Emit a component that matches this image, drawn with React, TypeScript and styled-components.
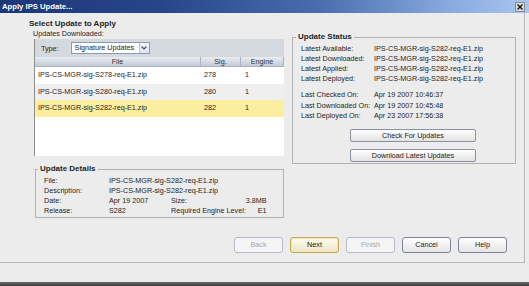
import React from "react";
import styled, { createGlobalStyle, css } from "styled-components";

const Global = createGlobalStyle`
  html, body { margin: 0; padding: 0; background: #ececec; }
  * { box-sizing: border-box; }
`;

const Window = styled.div`
  width: 529px;
  height: 286px;
  display: flex;
  flex-direction: column;
  background: #ececec;
  font-family: "Liberation Sans", Arial, sans-serif;
  font-size: 7.2px;
  color: #1e1e1e;
  overflow: hidden;
`;

const TitleBar = styled.div`
  height: 13px;
  flex: none;
  display: flex;
  align-items: center;
  justify-content: space-between;
  padding: 0 4px 0 2px;
  background: linear-gradient(to right, #1c3878 0%, #26458a 30%, #4a6cae 60%, #88aade 85%, #a8c6f0 100%);
`;

const Title = styled.span`
  color: #fff;
  font-weight: bold;
  font-size: 7.7px;
  line-height: 13px;
`;

const CloseBox = styled.div`
  width: 10px;
  height: 10px;
  background: #dcdcdc;
  border: 1px solid #8a8a8a;
  display: flex;
  align-items: center;
  justify-content: center;
`;

const Panel = styled.div`
  width: 525px;
  height: 250px;
  flex: none;
  border-right: 1px solid #b8b8b8;
  border-bottom: 1px solid #b8b8b8;
  padding: 6px 17px 0 29px;
  display: flex;
  flex-direction: column;
`;

const Columns = styled.div`
  display: grid;
  grid-template-columns: 255px 224px;
  column-gap: 8px;
  height: 201px;
  align-items: start;
`;

const LeftCol = styled.div`
  display: flex;
  flex-direction: column;
`;

const Heading = styled.div`
  font-weight: bold;
  font-size: 8px;
  line-height: 10px;
  height: 10px;
`;

const SubLabel = styled.div`
  line-height: 10px;
  height: 10px;
  margin-left: 4px;
`;

const TablePanel = styled.div`
  margin-left: 5px;
  width: 250px;
  height: 117px;
  background: #fff;
  border-left: 1px solid #8e8e8e;
  display: flex;
  flex-direction: column;
`;

const TypeStrip = styled.div`
  height: 18px;
  flex: none;
  background: #d4d8df;
  display: flex;
  align-items: center;
  padding-left: 6px;
  gap: 12px;
`;

const Select = styled.div`
  width: 79px;
  height: 12px;
  background: #fff;
  border: 1px solid #8c9ab0;
  display: flex;
  align-items: center;
  justify-content: space-between;
  padding-left: 3px;
  line-height: 10px;
`;

const SelectArrow = styled.div`
  width: 10px;
  height: 10px;
  border-left: 1px solid #b8c2d0;
  background: linear-gradient(#f6f8fb, #dde3ec);
  display: flex;
  align-items: center;
  justify-content: center;
`;

const Grid = styled.div`
  display: grid;
  grid-template-columns: 166px 40px 1fr;
`;

const HeadCell = styled.div`
  height: 10px;
  line-height: 10px;
  text-align: center;
  color: #333;
  background: linear-gradient(#e9edf3, #c3cbd7);
  border-right: 1px solid #a9b2bf;
  border-bottom: 1px solid #a9b2bf;
  &:last-child { border-right: none; }
`;

const Cell = styled.div<{ $bg: string; $pad?: number }>`
  height: 16.5px;
  line-height: 16.5px;
  padding-left: ${(p) => p.$pad ?? 3}px;
  background: ${(p) => p.$bg};
  white-space: nowrap;
`;

const groupBox = css`
  border: 1px solid #b2b2b2;
  margin: 0;
  min-width: 0;
`;

const Legend = styled.legend<{ $shift: number }>`
  font-weight: bold;
  font-size: 8px;
  line-height: 10px;
  padding: 0 2px;
  margin-left: ${(p) => p.$shift}px;
`;

const DetailsGroup = styled.fieldset`
  ${groupBox}
  margin-top: 8px;
  margin-left: 6px;
  width: 249px;
  padding: 2px 23px 1px 8px;
  display: grid;
  grid-template-columns: 65px 62px 1fr auto;
  grid-auto-rows: 10px;
  line-height: 10px;
  white-space: nowrap;
`;

const Span3 = styled.div`
  grid-column: 2 / span 3;
`;

const Right = styled.div`
  text-align: right;
`;

const StatusGroup = styled.fieldset`
  ${groupBox}
  margin-top: 13px;
  width: 224px;
  padding: 2px 8px 1px 8px;
  display: flex;
  flex-direction: column;
`;

const InfoList = styled.div<{ $gap: number }>`
  display: grid;
  grid-template-columns: 73px 1fr;
  grid-auto-rows: ${(p) => p.$gap}px;
  line-height: ${(p) => p.$gap}px;
  white-space: nowrap;
`;

const Spacer = styled.div<{ $h: number }>`
  height: ${(p) => p.$h}px;
  flex: none;
`;

const ActionButton = styled.div`
  margin-left: 49px;
  width: 126px;
  height: 13px;
  line-height: 11px;
  text-align: center;
  border: 1px solid #8a92a0;
  border-radius: 2px;
  background: linear-gradient(#ffffff, #e2e2e2);
  color: #222;
`;

const ButtonRow = styled.div`
  margin-top: 17px;
  display: flex;
  justify-content: flex-end;
  gap: 7px;
`;

const WizardButton = styled.div<{ $variant?: "disabled" | "default" }>`
  width: 49px;
  height: 16px;
  line-height: 14px;
  text-align: center;
  border-radius: 3px;
  border: 1px solid #7c8696;
  background: linear-gradient(#ffffff, #e4e4e4);
  color: #222;
  ${(p) =>
    p.$variant === "disabled" &&
    css`
      border-color: #b4bccb;
      background: #f5f5f5;
      color: #a8a8a8;
    `}
  ${(p) =>
    p.$variant === "default" &&
    css`
      border-color: #c6a858;
      background: linear-gradient(#fffdf0, #ebe5c6);
      box-shadow: inset 0 0 0 1px #f3e6b0;
      color: #111;
    `}
`;

const Filler = styled.div`
  flex: 1;
`;

const BottomBar = styled.div`
  height: 4px;
  flex: none;
  background: linear-gradient(#6a6a6a, #3e3e3e);
`;

const rows = [
  { file: "IPS-CS-MGR-sig-S278-req-E1.zip", sig: "278", eng: "1", bg: "#ffffff" },
  { file: "IPS-CS-MGR-sig-S280-req-E1.zip", sig: "280", eng: "1", bg: "#efefef" },
  { file: "IPS-CS-MGR-sig-S282-req-E1.zip", sig: "282", eng: "1", bg: "#fbee9f" },
];

export default function App() {
  const latest = "IPS-CS-MGR-sig-S282-req-E1.zip";
  return (
    <Window>
      <Global />
      <TitleBar>
        <Title>Apply IPS Update...</Title>
        <CloseBox>
          <svg width="6" height="6" viewBox="0 0 6 6">
            <path d="M0.5 0.5 L5.5 5.5 M5.5 0.5 L0.5 5.5" stroke="#111" strokeWidth="1.4" />
          </svg>
        </CloseBox>
      </TitleBar>
      <Panel>
        <Columns>
          <LeftCol>
            <Heading>Select Update to Apply</Heading>
            <SubLabel>Updates Downloaded:</SubLabel>
            <TablePanel>
              <TypeStrip>
                <span>Type:</span>
                <Select>
                  <span>Signature Updates</span>
                  <SelectArrow>
                    <svg width="6" height="4" viewBox="0 0 6 4">
                      <path d="M0.5 0.5 L3 3 L5.5 0.5" stroke="#3a4a66" strokeWidth="1.1" fill="none" />
                    </svg>
                  </SelectArrow>
                </Select>
              </TypeStrip>
              <Grid>
                <HeadCell>File</HeadCell>
                <HeadCell>Sig.</HeadCell>
                <HeadCell>Engine</HeadCell>
                {rows.map((r) => (
                  <React.Fragment key={r.sig}>
                    <Cell $bg={r.bg}>{r.file}</Cell>
                    <Cell $bg={r.bg}>{r.sig}</Cell>
                    <Cell $bg={r.bg} $pad={4}>{r.eng}</Cell>
                  </React.Fragment>
                ))}
              </Grid>
            </TablePanel>
            <DetailsGroup>
              <Legend $shift={-6}>Update Details</Legend>
              <div>File:</div>
              <Span3>{latest}</Span3>
              <div>Description:</div>
              <Span3>{latest}</Span3>
              <div>Date:</div>
              <div>Apr 19 2007</div>
              <div>Size:</div>
              <Right>3.8MB</Right>
              <div>Release:</div>
              <div>S282</div>
              <div>Required Engine Level:</div>
              <Right>E1</Right>
            </DetailsGroup>
          </LeftCol>
          <StatusGroup>
            <Legend $shift={-5}>Update Status</Legend>
            <InfoList $gap={10}>
              <div>Latest Available:</div>
              <div>{latest}</div>
              <div>Latest Downloaded:</div>
              <div>{latest}</div>
              <div>Latest Applied:</div>
              <div>{latest}</div>
              <div>Latest Deployed:</div>
              <div>{latest}</div>
            </InfoList>
            <Spacer $h={6} />
            <InfoList $gap={10.5}>
              <div>Last Checked On:</div>
              <div>Apr 19 2007 10:46:37</div>
              <div>Last Downloaded On:</div>
              <div>Apr 19 2007 10:45:48</div>
              <div>Last Deployed On:</div>
              <div>Apr 23 2007 17:56:38</div>
            </InfoList>
            <Spacer $h={7} />
            <ActionButton>Check For Updates</ActionButton>
            <Spacer $h={7} />
            <ActionButton>Download Latest Updates</ActionButton>
          </StatusGroup>
        </Columns>
        <ButtonRow>
          <WizardButton $variant="disabled">Back</WizardButton>
          <WizardButton $variant="default">Next</WizardButton>
          <WizardButton $variant="disabled">Finish</WizardButton>
          <WizardButton>Cancel</WizardButton>
          <WizardButton>Help</WizardButton>
        </ButtonRow>
      </Panel>
      <Filler />
      <BottomBar />
    </Window>
  );
}
